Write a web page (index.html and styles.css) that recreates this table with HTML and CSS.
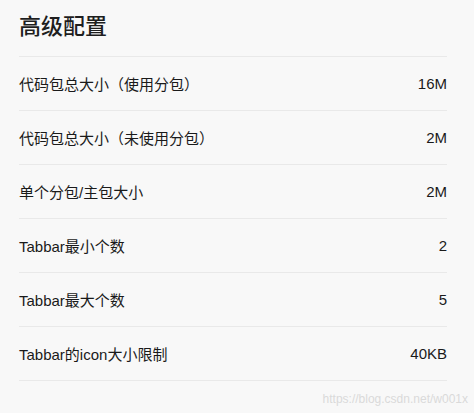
FILE: index.html
```html
<!DOCTYPE html>
<html lang="zh">
<head>
<meta charset="utf-8">
<link rel="stylesheet" href="styles.css">
</head>
<body>
<div class="panel">
  <div class="title">高级配置</div>
  <div class="list">
    <div class="row"><span class="label">代码包总大小（使用分包）</span><span class="value">16M</span></div>
    <div class="row"><span class="label">代码包总大小（未使用分包）</span><span class="value">2M</span></div>
    <div class="row"><span class="label">单个分包/主包大小</span><span class="value">2M</span></div>
    <div class="row"><span class="label">Tabbar最小个数</span><span class="value">2</span></div>
    <div class="row"><span class="label">Tabbar最大个数</span><span class="value">5</span></div>
    <div class="row"><span class="label">Tabbar的icon大小限制</span><span class="value">40KB</span></div>
  </div>
  <div class="watermark">https://blog.csdn.net/w001x</div>
</div>
</body>
</html>
```

FILE: styles.css
```css
html, body {
  margin: 0;
  padding: 0;
  background: #ffffff;
}
.panel {
  width: 474px;
  height: 413px;
  box-sizing: border-box;
  background: #f8f8f8;
  padding: 0 27px 0 19px;
  font-family: "Liberation Sans", "Noto Sans CJK SC", sans-serif;
  color: #1a1a1a;
  position: relative;
}
.title {
  height: 56px;
  line-height: 54px;
  font-size: 22px;
  font-weight: 500;
  color: #1e1e1e;
}
.list {
  display: flex;
  flex-direction: column;
}
.row {
  display: flex;
  justify-content: space-between;
  align-items: center;
  height: 53px;
  border-top: 1px solid #e9e9e9;
  font-size: 15px;
}
.row:last-child {
  border-bottom: 1px solid #e9e9e9;
}
.watermark {
  position: absolute;
  right: 6px;
  bottom: 7px;
  font-size: 12px;
  color: #dadada;
  font-family: "Liberation Sans", sans-serif;
}
```
